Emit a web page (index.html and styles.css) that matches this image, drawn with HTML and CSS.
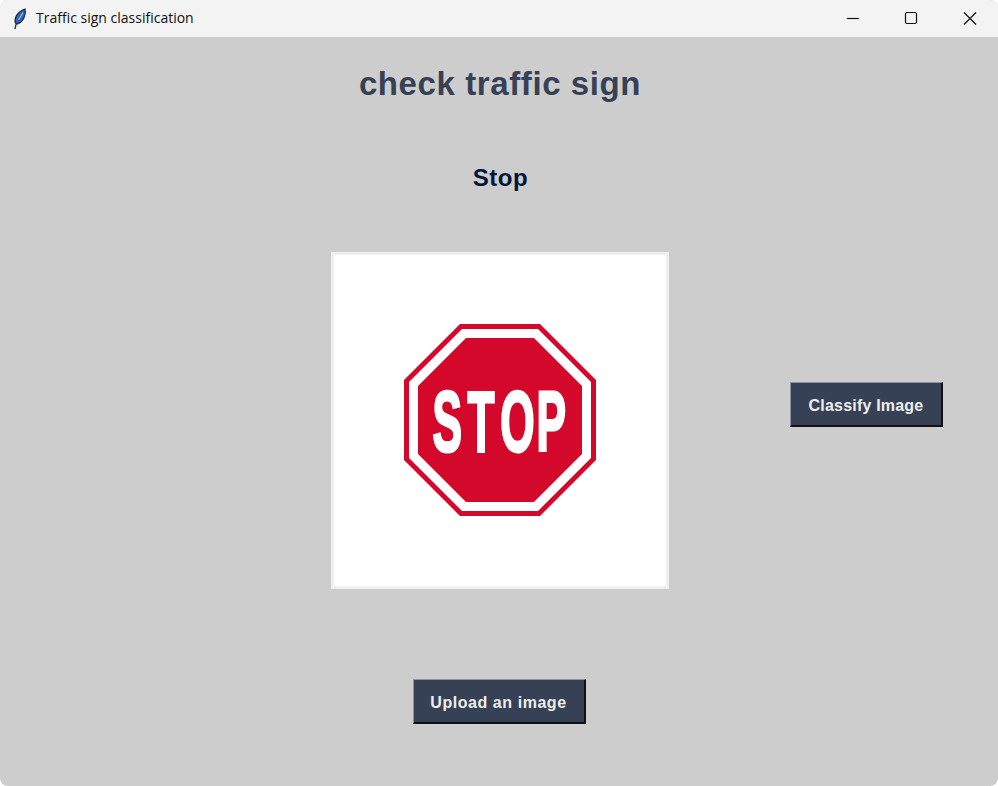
FILE: index.html
```html
<!DOCTYPE html>
<html lang="en">
  <head>
    <meta charset="UTF-8" />
    <meta name="viewport" content="width=device-width, initial-scale=1.0" />
    <title>Traffic sign classification</title>
    <link rel="stylesheet" href="styles.css">
  </head>
  <body>
    <div class="window">
      <!-- title bar -->
      <div class="titlebar">
        <svg class="app-icon" width="16" height="24" viewBox="0 0 16 24">
          <path d="M3 22 C3.5 19 4 17 5 15" fill="none" stroke="#333" stroke-width="1.4" />
          <path d="M3.5 16 C2 11 5 5 13 2 C14.5 8 11 15 5.5 17 Z" fill="#2f66b0" stroke="#1d2a3f" stroke-width="1.3" />
          <path d="M6.5 13 L11 5.5" fill="none" stroke="#8fb8ea" stroke-width="1.2" />
        </svg>
        <span class="window-title">Traffic sign classification</span>
        <div class="controls">
          <svg class="control" width="58" height="37" viewBox="0 0 58 37">
            <path d="M22 18.5 H34" stroke="#111" stroke-width="1.2" fill="none" />
          </svg>
          <svg class="control" width="58" height="37" viewBox="0 0 58 37">
            <rect x="22.5" y="12.5" width="11" height="11" rx="1.5" stroke="#111" stroke-width="1.2" fill="none" />
          </svg>
          <svg class="control" width="58" height="37" viewBox="0 0 58 37">
            <path d="M23 12.5 L35 24.5 M35 12.5 L23 24.5" stroke="#111" stroke-width="1.2" fill="none" />
          </svg>
        </div>
      </div>

      <div class="content">
        <h1 class="heading">check traffic sign</h1>
        <p class="result">Stop</p>

        <div class="image-row">
          <div class="preview">
            <svg class="stop-sign" width="192" height="192" viewBox="0 0 192 192">
              <polygon points="56,0 136,0 192,56 192,136 136,192 56,192 0,136 0,56" fill="#d4082b" />
              <polygon points="58,5 134,5 187,58 187,134 134,187 58,187 5,134 5,58" fill="#fff" />
              <polygon points="62,14 130,14 178,62 178,130 130,178 62,178 14,130 14,62" fill="#d4082b" />
              <text class="stop-text" transform="translate(0 127) scale(0.52 1)" x="55 122 185 255">STOP</text>
            </svg>
          </div>
          <button type="button" class="action classify">Classify Image</button>
        </div>

        <button type="button" class="action upload">Upload an image</button>
      </div>
    </div>
  </body>
</html>
```

FILE: styles.css
```css
html,
body {
  margin: 0;
  padding: 0;
  background-color: #fff;
}

.window {
  width: 998px;
  height: 786px;
  display: flex;
  flex-direction: column;
  border-radius: 8px;
  overflow: hidden;
  background-color: #cdcdcd;
  font-family: "Liberation Sans", Arial, sans-serif;
}

.titlebar {
  height: 37px;
  flex: none;
  display: flex;
  align-items: center;
  background-color: #f3f3f3;
}

.app-icon {
  margin-left: 12px;
  flex: none;
}

.window-title {
  margin: 0 0 2px 8px;
  font-family: "Open Sans", sans-serif;
  font-size: 14px;
  color: #111;
}

.controls {
  margin-left: auto;
  display: flex;
  margin-right: -1px;
}

.control {
  display: block;
}

.content {
  flex: 1;
  display: flex;
  flex-direction: column;
  align-items: center;
}

.heading {
  margin: 27px 0 0 2px;
  font-size: 33px;
  line-height: 40px;
  font-weight: bold;
  letter-spacing: 0.6px;
  color: #364156;
}

.result {
  margin: 60px 0 0 3px;
  font-size: 24px;
  line-height: 28px;
  font-weight: bold;
  letter-spacing: 0.5px;
  color: #011638;
}

.image-row {
  margin-top: 60px;
  align-self: stretch;
  display: grid;
  grid-template-columns: 331px 338px 1fr;
}

.preview {
  grid-column: 2;
  box-sizing: border-box;
  width: 338px;
  height: 337px;
  padding-bottom: 2px;
  display: flex;
  align-items: center;
  justify-content: center;
  background-color: #fff;
  border: 3px solid #f0f0f0;
}

.stop-sign {
  display: block;
}

.stop-text {
  font-family: "Liberation Sans", Arial, sans-serif;
  font-size: 85px;
  font-weight: bold;
  fill: #fff;
  stroke: #fff;
  stroke-width: 3px;
}

.action {
  box-sizing: border-box;
  height: 45px;
  padding: 3px 0 0;
  border: 1px solid #2a3345;
  border-top-color: #8d93a0;
  border-left-color: #8d93a0;
  border-right: 2px solid #111;
  border-bottom: 2px solid #111;
  background-color: #364156;
  color: #eeeeee;
  font-family: "Liberation Sans", Arial, sans-serif;
  font-size: 16px;
  font-weight: bold;
}

.classify {
  width: 153px;
  margin: 130px 0 0 121px;
  letter-spacing: 0.2px;
}

.upload {
  width: 173px;
  margin-top: 90px;
  letter-spacing: 0.55px;
}
```
